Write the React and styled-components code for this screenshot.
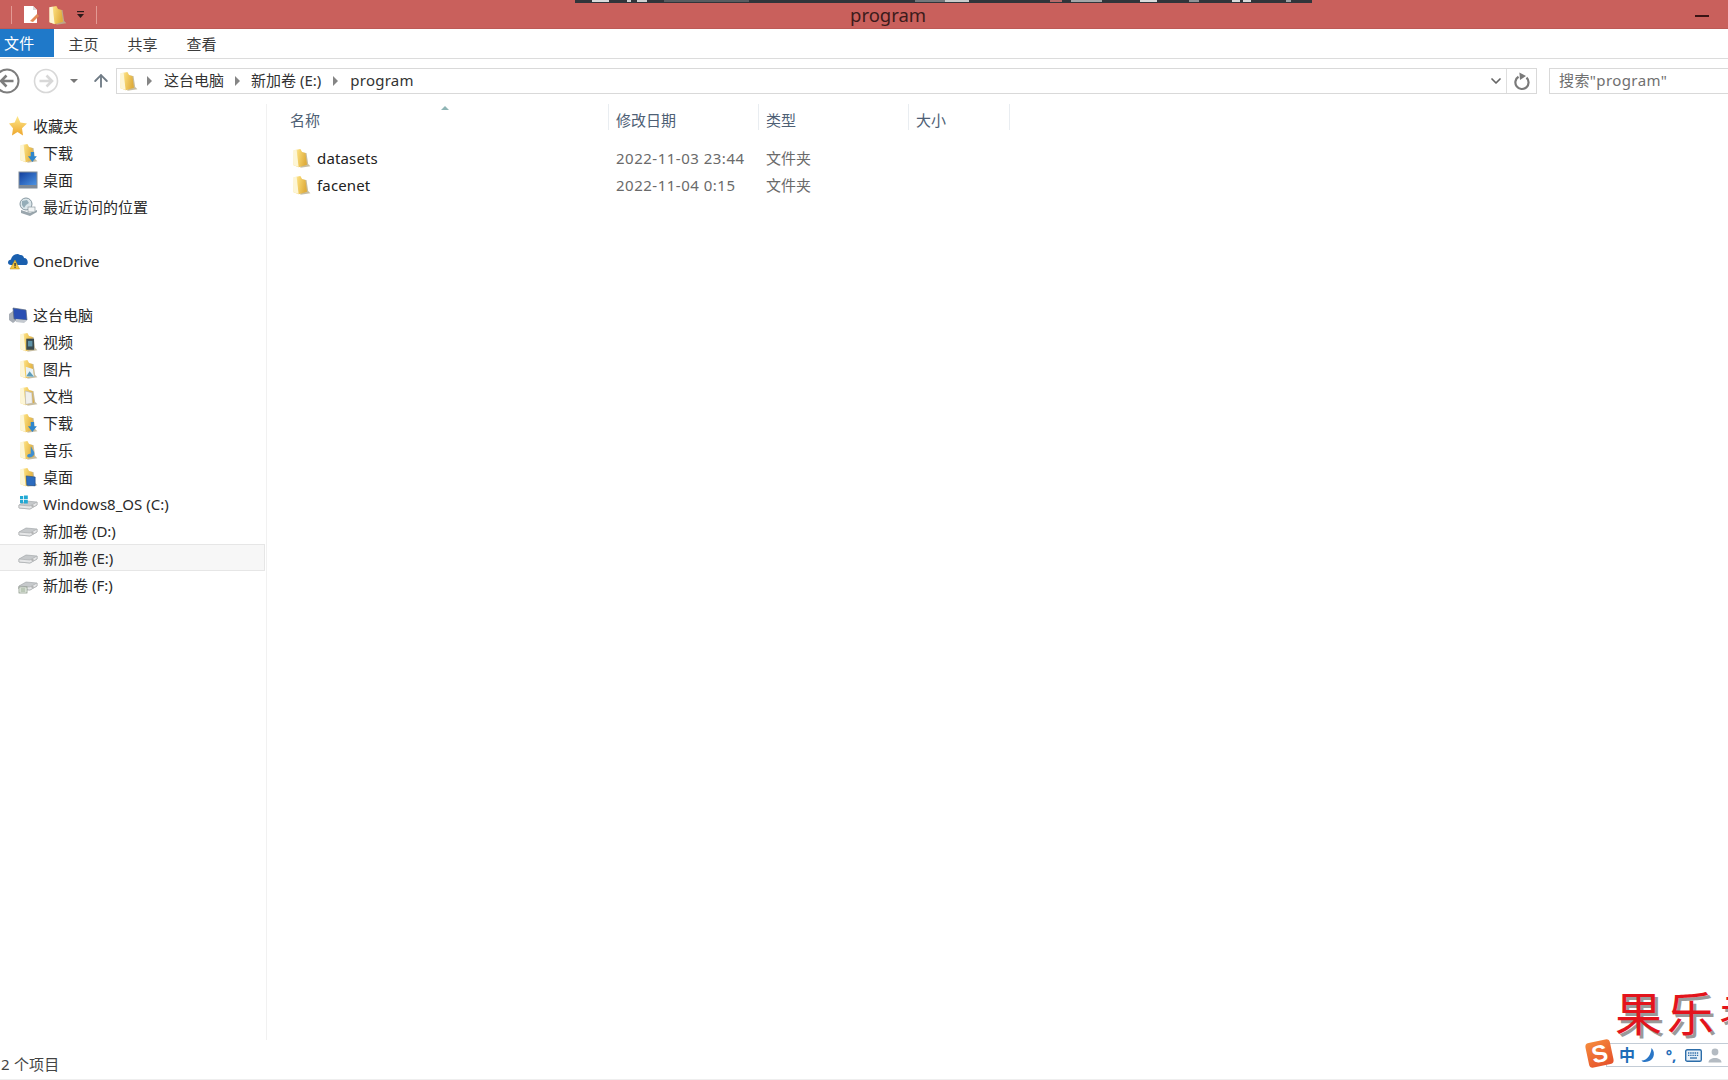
import React, { useId } from "react";
import styled, { createGlobalStyle } from "styled-components";
import { ArrowUp, ChevronDown } from "lucide-react";

const Global = createGlobalStyle`
  html, body { margin: 0; padding: 0; background: #fff; }
  body { font-family: "Noto Sans", "Noto Sans CJK SC", sans-serif; }
  #root { width: 1728px; height: 1080px; overflow: hidden; }
`;

const Page = styled.div`
  position: relative;
  width: 1728px;
  height: 1080px;
  display: flex;
  flex-direction: column;
  overflow: hidden;
  background: #fff;
  font-size: 15px;
  line-height: 20px;
  color: #222;
`;

/* ---------- title bar ---------- */
const TitleBar = styled.header`
  position: relative;
  flex: 0 0 29px;
  display: grid;
  grid-template-columns: 850px 1fr auto;
  align-items: center;
  background: #c9605c;
  box-shadow: inset 0 -1px 0 #bd5a56;
`;
const QuickAccess = styled.div`
  display: flex;
  align-items: center;
  padding-left: 11px;
  height: 29px;
`;
const QuickSep = styled.span`
  width: 1px;
  height: 18px;
  background: #e39a94;
  margin-right: ${(p) => p.$after || 0}px;
`;
const QuickSlot = styled.span`
  display: inline-flex;
  align-items: center;
  justify-content: center;
  width: ${(p) => p.$w}px;
  margin-right: ${(p) => p.$after || 0}px;
`;
const WindowTitle = styled.div`
  font-size: 18.5px;
  line-height: 29px;
  color: #3c1b1b;
`;
const Minimize = styled.span`
  width: 14px;
  height: 2px;
  background: #3a1414;
  margin: 3px 19px 0 0;
`;
const TaskStrip = styled.div`
  position: absolute;
  left: 575px;
  top: 0;
  width: 737px;
  height: 3px;
  background: #31353a;
`;
const StripMark = styled.span`
  position: absolute;
  top: 0;
  height: 2px;
  left: ${(p) => p.$x - 575}px;
  width: ${(p) => p.$w}px;
  background: ${(p) => p.$c};
`;

/* ---------- ribbon ---------- */
const Ribbon = styled.nav`
  flex: 0 0 30px;
  display: flex;
  box-sizing: border-box;
  border-bottom: 1px solid #dcdcdc;
`;
const FileTab = styled.div`
  width: 54px;
  height: 28px;
  box-sizing: border-box;
  padding: 4px 0 0 4px;
  background: #1f79c9;
  color: #fff;
  letter-spacing: 0.2px;
`;
const Tab = styled.div`
  padding: 5px 14.5px 0;
  color: #3c3c3c;
`;

/* ---------- address row ---------- */
const AddressRow = styled.div`
  flex: 0 0 45px;
  display: flex;
  align-items: flex-start;
  box-sizing: border-box;
  padding-top: 9px;
`;
const NavButton = styled.span`
  flex: none;
  display: flex;
  align-items: center;
  justify-content: center;
  height: 26px;
  width: ${(p) => p.$w}px;
  margin-left: ${(p) => p.$ml || 0}px;
`;
const Caret = styled.span`
  width: 0;
  height: 0;
  border-left: 4px solid transparent;
  border-right: 4px solid transparent;
  border-top: 4px solid ${(p) => p.$c || "#777"};
`;
const AddressBox = styled.div`
  flex: none;
  width: 1421px;
  height: 26px;
  margin-left: 5px;
  box-sizing: border-box;
  border: 1px solid #d9d9d9;
  display: flex;
  align-items: center;
  padding-left: 2px;
  color: #333;
`;
const CrumbChevron = styled.span`
  flex: none;
  width: 0;
  height: 0;
  border-top: 5px solid transparent;
  border-bottom: 5px solid transparent;
  border-left: 5px solid #858585;
  margin: 0 ${(p) => p.$r}px 0 ${(p) => p.$l}px;
`;
const Crumb = styled.span`
  white-space: nowrap;
  line-height: 22px;
  letter-spacing: ${(p) => p.$ls || 0}px;
  padding-bottom: 2px;
`;
const AddressEnd = styled.div`
  margin-left: auto;
  display: flex;
  align-items: center;
  height: 24px;
  color: #666;
`;
const AddressAction = styled.span`
  display: flex;
  align-items: center;
  justify-content: center;
  width: ${(p) => p.$w}px;
  height: 24px;
  border-left: ${(p) => (p.$divided ? "1px solid #dedede" : "0")};
`;
const SearchBox = styled.div`
  flex: 1;
  height: 26px;
  margin: 0 -10px 0 12px;
  box-sizing: border-box;
  border: 1px solid #d9d9d9;
  padding-left: 9px;
  line-height: 22px;
  color: #707070;
  white-space: nowrap;
  letter-spacing: 0.4px;
`;

/* ---------- body ---------- */
const Body = styled.main`
  flex: 1;
  display: flex;
  min-height: 0;
`;
const Sidebar = styled.aside`
  flex: 0 0 267px;
  box-sizing: border-box;
  border-right: 1px solid #f1f1f1;
  padding-top: 8px;
`;
const NavRow = styled.div`
  height: 27px;
  box-sizing: border-box;
  display: flex;
  align-items: center;
  gap: 4px;
  padding-left: ${(p) => (p.$top ? 7 : 17)}px;
  margin: ${(p) => p.$gap || 0}px 1px 0 0;
  color: #2a2a2a;
  border: 1px solid ${(p) => (p.$hover ? "#e6e6e6" : "transparent")};
  border-width: 1px 1px 1px 0;
  background: ${(p) => (p.$hover ? "#f7f7f7" : "transparent")};
  white-space: nowrap;
`;
const NavIcon = styled.span`
  flex: none;
  width: 22px;
  height: 22px;
  display: flex;
  align-items: center;
  justify-content: center;
`;

const Content = styled.section`
  flex: 1;
  padding-left: 16px;
`;
const Columns = "326px 150px 150px 101px";
const HeaderRow = styled.div`
  display: grid;
  grid-template-columns: ${Columns};
  width: 727px;
  height: 24px;
`;
const HeaderCell = styled.div`
  position: relative;
  box-sizing: border-box;
  padding: 6px 0 0 7px;
  border-right: 1px solid #e9edf1;
  color: #4e6075;
  white-space: nowrap;
`;
const SortMark = styled.span`
  position: absolute;
  left: 158px;
  top: 2px;
  width: 0;
  height: 0;
  border-left: 4px solid transparent;
  border-right: 4px solid transparent;
  border-bottom: 4px solid #8fb5b5;
`;
const FileRows = styled.div`
  padding-top: 16px;
`;
const FileRow = styled.div`
  display: grid;
  grid-template-columns: ${Columns};
  width: 727px;
  height: 27px;
  align-items: center;
`;
const FileName = styled.div`
  display: flex;
  align-items: center;
  gap: 6px;
  padding-left: 9px;
  color: #222;
  letter-spacing: 0.15px;
`;
const FileMeta = styled.div`
  padding-left: 7px;
  color: #6a6a6a;
  white-space: nowrap;
  letter-spacing: ${(p) => p.$ls || 0}px;
`;

/* ---------- status ---------- */
const StatusBar = styled.footer`
  flex: 0 0 40px;
  box-sizing: border-box;
  padding: 14px 0 0 1px;
  border-bottom: 1px solid #eee;
  color: #444;
  letter-spacing: 0.2px;
`;

/* ---------- overlays ---------- */
const Watermark = styled.div`
  position: absolute;
  left: 1615px;
  top: 982px;
  font-family: "Noto Sans CJK SC", serif;
  font-size: 47px;
  line-height: 58px;
  letter-spacing: 5px;
  font-weight: 400;
  white-space: nowrap;
  color: #e3141c;
  text-shadow: 3px 3px 0 #9a9a9a;
`;
const ImeBar = styled.div`
  position: absolute;
  left: 1606px;
  top: 1043px;
  width: 130px;
  height: 24px;
  box-sizing: border-box;
  border: 1px solid #c3ccd6;
  background: #fff;
  display: flex;
  align-items: center;
  padding-left: 9px;
`;
const ImeLogo = styled.div`
  position: absolute;
  left: 1587px;
  top: 1041px;
  width: 25px;
  height: 25px;
  border-radius: 4px;
  transform: rotate(-12deg);
  background: linear-gradient(160deg, #f58a3c, #e5502a);
  color: #fff;
  font: 900 24px/25px "Liberation Sans", sans-serif;
  text-align: center;
`;
const ImeItem = styled.span`
  flex: none;
  display: inline-flex;
  align-items: center;
  justify-content: center;
  width: ${(p) => p.$w}px;
  color: #1f6db8;
  font-weight: 700;
  font-size: ${(p) => p.$size || 15}px;
  line-height: 20px;
`;

/* ---------- icons ---------- */
function FolderIcon({ overlay }) {
  const id = useId();
  return (
    <svg width="19" height="20" viewBox="0 0 16 18" style={{ flex: "none" }}>
      <defs>
        <linearGradient id={id} x1="0" x2="1" y1="0" y2="0.3">
          <stop offset="0" stopColor="#fdf3c6" />
          <stop offset="0.4" stopColor="#f7d670" />
          <stop offset="1" stopColor="#e0ae3e" />
        </linearGradient>
      </defs>
      <path d="M7 4 L12.5 4.5 L14 14.5 L16 16.5 L7 17.8Z" fill="#bdb28f" opacity="0.85" />
      <path d="M0.8 2 L7 1 L8.5 3.5 L11.5 4.5 L13 15 L5.5 17.4 L0.8 15.6Z" fill={`url(#${id})`} />
      <path d="M0.8 2 L3.6 1.6 L5.4 17 L0.8 15.6Z" fill="#fdf6d6" />
      {overlay === "down" && <path d="M10 8 h3 v4 h2.5 l-4 5 l-4 -5 h2.5Z" fill="#2f86cc" />}
      {overlay === "film" && (
        <g>
          <rect x="6" y="6" width="7" height="10" fill="#3a4a4e" />
          <rect x="7.5" y="8" width="4" height="5" fill="#5f93a8" />
        </g>
      )}
      {overlay === "pic" && (
        <g>
          <path d="M5.5 7 L12 9 L13 16 L6 16Z" fill="#e9f2f6" />
          <path d="M6 15.5 L9 11 L13 16Z" fill="#5d9db9" />
        </g>
      )}
      {overlay === "doc" && <path d="M5 4.5 L11 6 L11.5 15.5 L5.5 16.5Z" fill="#f0f0ee" stroke="#b9b9b9" strokeWidth="0.6" />}
      {overlay === "music" && (
        <path d="M10 6 L10.6 6 C11 9 14 10 13 13 C12.3 15.5 8 16.5 7 15 C6.2 13.5 8 12 10 12.4Z" fill="#3f8fd0" />
      )}
      {overlay === "desk" && <path d="M6 8 L14 9 L14 17 L6.5 16.5Z" fill="#2c6cbf" stroke="#17437e" strokeWidth="0.5" />}
    </svg>
  );
}

const DocIcon = () => (
  <svg width="17" height="19" viewBox="0 0 17 19">
    <path d="M1 1 H10 L14 5 V18 H1Z" fill="#fff" />
    <path d="M10 1 L14 5 H10Z" fill="#d9d9d9" />
    <path d="M7 16 L14 9 L16 11 L10 17Z" fill="#e48a55" />
  </svg>
);
const TinyCaret = () => (
  <svg width="9" height="9" viewBox="0 0 9 9">
    <rect x="1" y="1" width="7" height="1.2" fill="#2b1a1a" />
    <path d="M1 4 H8 L4.5 8Z" fill="#2b1a1a" />
  </svg>
);
const RoundArrow = ({ color, width, dir }) => (
  <svg width="26" height="26" viewBox="0 0 26 26" fill="none" stroke={color}>
    <circle cx="13" cy="13" r="11.5" strokeWidth={width} />
    <path
      d={dir === "left" ? "M19.5 13 H7 M12.5 7.5 L7 13 L12.5 18.5" : "M6.5 13 H19 M13.5 7.5 L19 13 L13.5 18.5"}
      strokeWidth="2.6"
    />
  </svg>
);
const RefreshIcon = () => (
  <svg width="18" height="20" viewBox="0 0 18 20">
    <path d="M5.5 5.8 A6.6 6.6 0 1 0 13.5 6.6" fill="none" stroke="#7a7a7a" strokeWidth="2.2" />
    <path d="M6.4 1.4 L13 5 L7 9Z" fill="#7a7a7a" />
  </svg>
);
const StarIcon = () => (
  <svg width="20" height="22" viewBox="0 0 20 22">
    <defs>
      <linearGradient id="star" x1="0" y1="0" x2="0" y2="1">
        <stop offset="0" stopColor="#fde98d" />
        <stop offset="1" stopColor="#eea62b" />
      </linearGradient>
    </defs>
    <path d="M9.5 1 L12.4 7.6 L19 8.6 L14 13.2 L15 20.5 L9.5 17 L4 20.5 L5 13.2 L1 8.6 L6.7 7.6Z" fill="url(#star)" />
  </svg>
);
const DesktopIcon = () => (
  <svg width="20" height="18" viewBox="0 0 20 18">
    <defs>
      <linearGradient id="dsk" x1="0" y1="0" x2="1" y2="1">
        <stop offset="0" stopColor="#123f9e" />
        <stop offset="1" stopColor="#4c93e2" />
      </linearGradient>
    </defs>
    <rect x="0.5" y="0.5" width="19" height="17" fill="#7f8a96" />
    <rect x="1.5" y="1.5" width="17" height="12.5" fill="url(#dsk)" />
  </svg>
);
const RecentIcon = () => (
  <svg width="20" height="20" viewBox="0 0 20 20">
    <path d="M3 13 L12 16 L19 13 L19 15 L12 19 L3 16Z" fill="#9aa6ad" />
    <circle cx="8" cy="7" r="6" fill="#dbe6ea" stroke="#8798a1" />
    <path d="M4 4 L9 3 L11 6 L8 8 L6 11 L4 8Z" fill="#94adb8" />
    <rect x="10" y="10" width="7" height="5" fill="#f1f4f5" stroke="#8d9aa1" strokeWidth="0.7" />
  </svg>
);
const CloudIcon = () => (
  <svg width="22" height="18" viewBox="0 0 22 18">
    <path d="M4 13 C0 13 0 8 4 7.5 C5 3 10 0.5 13 3 C15 2.5 17 4 17 6 C21 6 22 12 19 13Z" fill="#1a5fae" />
    <path d="M8 8 L12.5 17 H3Z" fill="#f3c63b" stroke="#b98e1a" strokeWidth="0.5" />
    <rect x="7.4" y="11" width="1.3" height="3" fill="#333" />
    <rect x="7.4" y="14.6" width="1.3" height="1.2" fill="#333" />
  </svg>
);
const PcIcon = () => (
  <svg width="20" height="18" viewBox="0 0 20 18">
    <path d="M1 8 L5 5 L9 7 V14 L5 17 L1 14Z" fill="#a7adb5" />
    <path d="M5 2 L18 4 L19 14 L6 13Z" fill="#2a4fb3" stroke="#5a6a80" strokeWidth="0.7" />
    <path d="M8 13 L19 14.5 L16 17 L8 16Z" fill="#c4c9cf" />
  </svg>
);
const DriveBody = () => (
  <g>
    <path d="M1 11 L8 7 L19 8 L19 11 L12 15 L1 14Z" fill="#c6c9cb" stroke="#9b9fa3" strokeWidth="0.6" />
    <path d="M1 11 L12 12 L19 8 L19 11 L12 15 L1 14Z" fill="#e6e7e8" stroke="#a4a7aa" strokeWidth="0.6" />
    <rect x="13.5" y="11.6" width="2" height="0.8" fill="#6b6b6b" />
  </g>
);
const WinDriveIcon = () => (
  <svg width="20" height="20" viewBox="0 0 20 20">
    <DriveBody />
    <path d="M2 2 h3.2 v3.2 H2Z M6 1.4 h3.8 v3.8 H6Z M2 6 h3.2 v3.2 H2Z M6 6 h3.8 v3.6 H6Z" fill="#22a9d4" />
  </svg>
);
const DriveIcon = () => (
  <svg width="20" height="20" viewBox="0 0 20 20">
    <DriveBody />
  </svg>
);
const NetDriveIcon = () => (
  <svg width="20" height="20" viewBox="0 0 20 20">
    <DriveBody />
    <rect x="1" y="12" width="8" height="6" fill="#f2f4f0" stroke="#7d8c7a" strokeWidth="0.7" />
    <path d="M2.5 14 h5 M2.5 16 h5" stroke="#67865f" strokeWidth="0.8" />
  </svg>
);
const MoonIcon = () => (
  <svg width="16" height="16" viewBox="0 0 16 16">
    <path d="M10.5 1 C15.5 6 12.5 15 4 15 C2.5 15 1.2 14.4 0.5 13.4 C6 13.6 10 8 10.5 1Z" fill="#2a76c6" />
  </svg>
);
const KeyboardIcon = () => (
  <svg width="17" height="13" viewBox="0 0 17 13">
    <rect x="0.7" y="0.7" width="15.6" height="11.6" rx="1.6" fill="#e8f1f9" stroke="#2c6da9" strokeWidth="1.4" />
    <path d="M3 4 h11 M3 6.4 h11" stroke="#2c6da9" strokeWidth="1.3" strokeDasharray="1.4 0.8" />
    <path d="M5 9 h7" stroke="#2c6da9" strokeWidth="1.3" />
  </svg>
);
const PersonIcon = () => (
  <svg width="14" height="15" viewBox="0 0 14 15">
    <circle cx="7" cy="4" r="3.4" fill="#b4bbc2" />
    <path d="M0.5 14.5 C0.5 8.5 13.5 8.5 13.5 14.5Z" fill="#b4bbc2" />
  </svg>
);

const stripMarks = [
  [592, 17, "#d9dcdc"], [627, 4, "#cfd2d2"], [637, 10, "#cfd2d2"], [664, 85, "#585c60"],
  [915, 30, "#74787c"], [945, 24, "#c9cccc"], [1050, 12, "#b66a6a"], [1071, 31, "#a3a6a8"],
  [1140, 17, "#d9dcdc"], [1189, 10, "#8e9295"], [1232, 8, "#d9dcdc"], [1243, 8, "#d9dcdc"], [1286, 5, "#9ea2a5"],
];

const favourites = [
  { label: "下载", icon: <FolderIcon overlay="down" /> },
  { label: "桌面", icon: <DesktopIcon /> },
  { label: "最近访问的位置", icon: <RecentIcon /> },
];
const computer = [
  { label: "视频", icon: <FolderIcon overlay="film" /> },
  { label: "图片", icon: <FolderIcon overlay="pic" /> },
  { label: "文档", icon: <FolderIcon overlay="doc" /> },
  { label: "下载", icon: <FolderIcon overlay="down" /> },
  { label: "音乐", icon: <FolderIcon overlay="music" /> },
  { label: "桌面", icon: <FolderIcon overlay="desk" /> },
  { label: "Windows8_OS (C:)", icon: <WinDriveIcon /> },
  { label: "新加卷 (D:)", icon: <DriveIcon /> },
  { label: "新加卷 (E:)", icon: <DriveIcon />, hover: true },
  { label: "新加卷 (F:)", icon: <NetDriveIcon /> },
];
const files = [
  { name: "datasets", date: "2022-11-03 23:44" },
  { name: "facenet", date: "2022-11-04 0:15" },
];

export default function App() {
  return (
    <Page>
      <Global />
      <TitleBar>
        <QuickAccess>
          <QuickSep $after={11} />
          <QuickSlot $w={17} $after={9}><DocIcon /></QuickSlot>
          <QuickSlot $w={16} $after={8}><FolderIcon /></QuickSlot>
          <QuickSlot $w={14} $after={9}><TinyCaret /></QuickSlot>
          <QuickSep />
        </QuickAccess>
        <WindowTitle>program</WindowTitle>
        <Minimize />
        <TaskStrip>
          {stripMarks.map(([x, w, c]) => (
            <StripMark key={x} $x={x} $w={w} $c={c} />
          ))}
        </TaskStrip>
      </TitleBar>

      <Ribbon>
        <FileTab>文件</FileTab>
        <Tab>主页</Tab>
        <Tab>共享</Tab>
        <Tab>查看</Tab>
      </Ribbon>

      <AddressRow>
        <NavButton $w={26} $ml={-6}><RoundArrow color="#7d7d7d" width={2} dir="left" /></NavButton>
        <NavButton $w={26} $ml={13}><RoundArrow color="#d8d8d8" width={1.6} dir="right" /></NavButton>
        <NavButton $w={10} $ml={10}><Caret /></NavButton>
        <NavButton $w={20} $ml={12}><ArrowUp size={20} color="#6f7b85" strokeWidth={2.2} /></NavButton>
        <AddressBox>
          <FolderIcon />
          <CrumbChevron $l={9} $r={12} />
          <Crumb>这台电脑</Crumb>
          <CrumbChevron $l={11} $r={11} />
          <Crumb>新加卷 (E:)</Crumb>
          <CrumbChevron $l={12} $r={12} />
          <Crumb $ls={0.25}>program</Crumb>
          <AddressEnd>
            <AddressAction $w={20}><ChevronDown size={16} strokeWidth={2.6} /></AddressAction>
            <AddressAction $w={29} $divided><RefreshIcon /></AddressAction>
          </AddressEnd>
        </AddressBox>
        <SearchBox>搜索"program"</SearchBox>
      </AddressRow>

      <Body>
        <Sidebar>
          <NavRow $top><NavIcon><StarIcon /></NavIcon>收藏夹</NavRow>
          {favourites.map((r) => (
            <NavRow key={r.label}><NavIcon>{r.icon}</NavIcon>{r.label}</NavRow>
          ))}
          <NavRow $top $gap={27}><NavIcon><CloudIcon /></NavIcon>OneDrive</NavRow>
          <NavRow $top $gap={27}><NavIcon><PcIcon /></NavIcon>这台电脑</NavRow>
          {computer.map((r) => (
            <NavRow key={r.label} $hover={r.hover}><NavIcon>{r.icon}</NavIcon>{r.label}</NavRow>
          ))}
        </Sidebar>
        <Content>
          <HeaderRow>
            <HeaderCell>名称<SortMark /></HeaderCell>
            <HeaderCell>修改日期</HeaderCell>
            <HeaderCell>类型</HeaderCell>
            <HeaderCell>大小</HeaderCell>
          </HeaderRow>
          <FileRows>
            {files.map((f) => (
              <FileRow key={f.name}>
                <FileName><FolderIcon />{f.name}</FileName>
                <FileMeta $ls={0.5}>{f.date}</FileMeta>
                <FileMeta>文件夹</FileMeta>
              </FileRow>
            ))}
          </FileRows>
        </Content>
      </Body>

      <StatusBar>2 个项目</StatusBar>

      <Watermark>果乐考</Watermark>
      <ImeBar>
        <ImeItem $w={22} $size={16}>中</ImeItem>
        <ImeItem $w={22}><MoonIcon /></ImeItem>
        <ImeItem $w={22}>°,</ImeItem>
        <ImeItem $w={22}><KeyboardIcon /></ImeItem>
        <ImeItem $w={22}><PersonIcon /></ImeItem>
      </ImeBar>
      <ImeLogo>S</ImeLogo>
    </Page>
  );
}
